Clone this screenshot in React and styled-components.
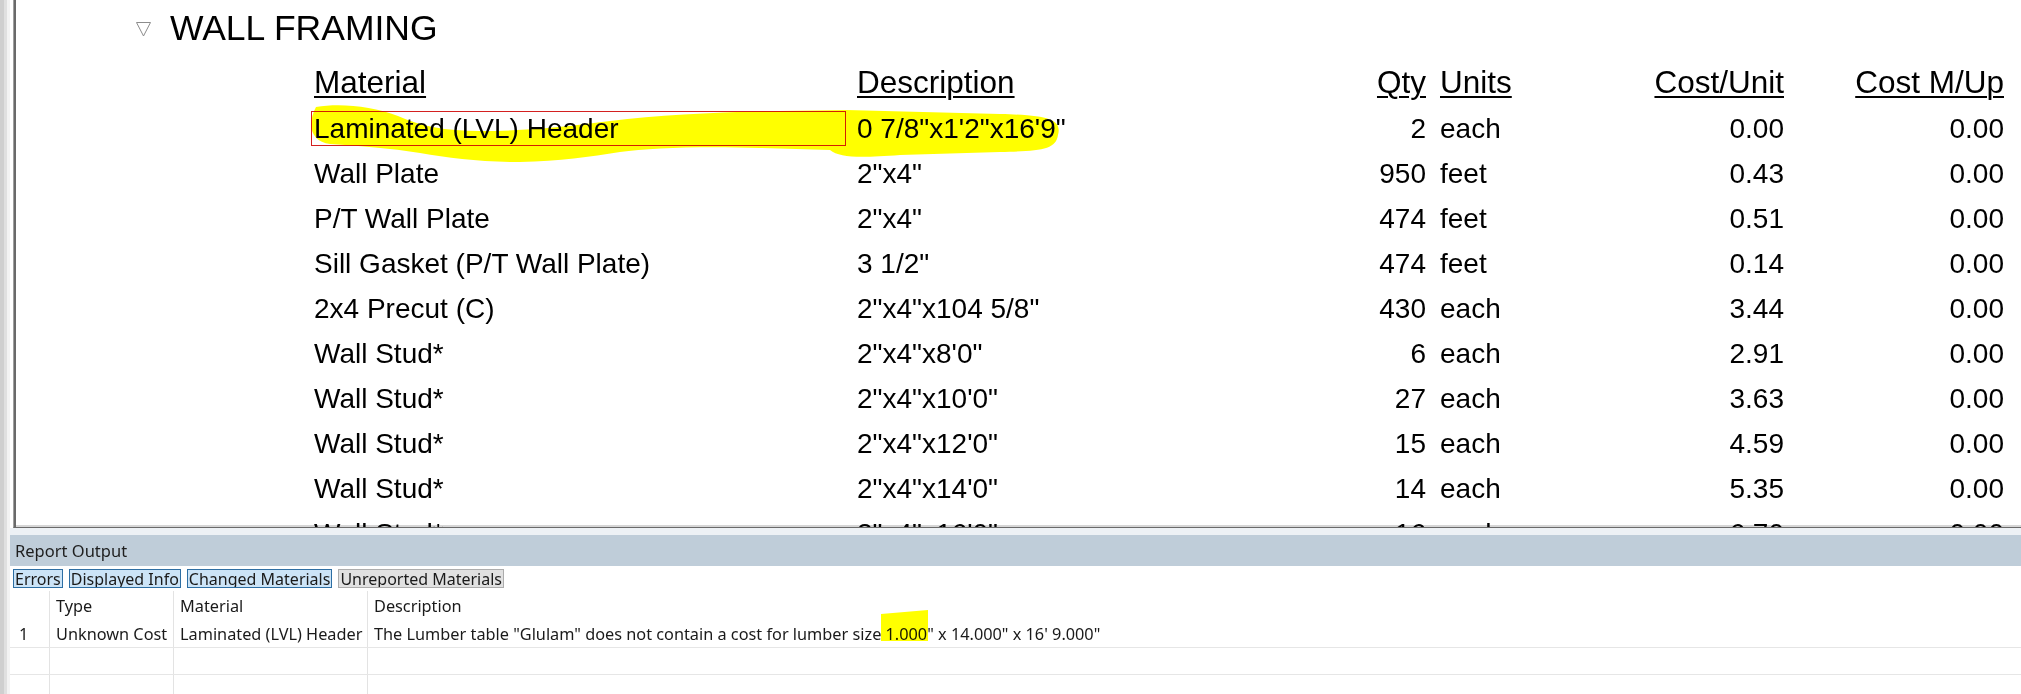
import React from 'react';
import styled, { createGlobalStyle, css } from 'styled-components';

const GlobalStyle = createGlobalStyle`
  html, body {
    margin: 0;
    padding: 0;
    background: #fff;
    overflow: hidden;
  }
`;

const Window = styled.div`
  position: relative;
  display: flex;
  width: 2021px;
  height: 694px;
  overflow: hidden;
  background: #fff;
`;

const SideStrip = styled.div`
  flex: 0 0 10px;
  background: linear-gradient(to right, #cfcfcf 0 4px, #e0e0e0 4px 7px, #f3f3f3 7px 10px);
`;

const Main = styled.div`
  flex: 1;
  min-width: 0;
  display: flex;
  flex-direction: column;
`;

const TakeoffPane = styled.div`
  flex: 0 0 528px;
  box-sizing: border-box;
  margin-left: 3px;
  padding: 8px 0 0 2px;
  border-left: 1px solid #a0a0a0;
  border-bottom: 1px solid #6a6a6a;
  box-shadow: inset 2px 0 0 #6a6a6a, inset 0 -2px 0 #d6d6d6;
  overflow: hidden;
  font-family: 'Liberation Sans', Arial, sans-serif;
  color: #000;
`;

const GroupHeader = styled.div`
  display: flex;
  align-items: center;
  gap: 18px;
  height: 40px;
  padding-left: 119px;
  font-size: 35.5px;
  line-height: 40px;
  white-space: nowrap;
`;

const Table = styled.div`
  margin: 11px 0 0 295px;
`;

const Row = styled.div`
  display: grid;
  grid-template-columns: 535px 524px 59px 171px 187px 220px;
  align-items: center;
  height: ${({ header }) => (header ? 47 : 45)}px;
`;

const cellPads = ['0 0 0 2px', '0 0 0 10px', '0 2px 0 0', '0 0 0 10px', '0 2px 0 0', '0 2px 0 0'];
const cellAligns = ['left', 'left', 'right', 'left', 'right', 'right'];

const HeadCell = styled.div`
  box-sizing: border-box;
  border: 1px solid transparent;
  padding: ${({ col }) => cellPads[col]};
  text-align: ${({ col }) => cellAligns[col]};
  font-size: 31.5px;
  line-height: 45px;
  white-space: nowrap;

  span {
    text-decoration: underline;
    text-decoration-thickness: 2px;
    text-underline-offset: 3px;
  }
`;

const Cell = styled.div`
  box-sizing: border-box;
  height: 35px;
  border: 1px solid transparent;
  padding: ${({ col }) => cellPads[col]};
  text-align: ${({ col }) => cellAligns[col]};
  font-size: 28px;
  line-height: 33px;
  white-space: nowrap;

  ${({ selected }) =>
    selected &&
    css`
      border-color: #d42020;
    `}
`;

const Splitter = styled.div`
  flex: 0 0 7px;
  background: #edf1f5;
`;

const OutputBar = styled.div`
  flex: 0 0 31px;
  padding-left: 5px;
  background: #bfcdd9;
  font: 16.5px/31px 'Noto Sans', sans-serif;
  color: #1e1e1e;
`;

const FilterBar = styled.div`
  display: flex;
  gap: 6px;
  height: 24px;
  box-sizing: border-box;
  padding: 3px 0 0 3px;
`;

const FilterTab = styled.div`
  height: 19px;
  box-sizing: border-box;
  padding: 0 1px;
  overflow: hidden;
  font: 16px/18px 'Noto Sans', sans-serif;
  color: #1a1a1a;
  white-space: nowrap;
  border: 1px solid ${({ active }) => (active ? '#2d6ea3' : '#adadad')};
  background: ${({ active }) => (active ? '#cce4f7' : '#e1e1e1')};
`;

const OutputGrid = styled.div`
  margin-top: 3px;
  font: 16.3px 'Noto Sans', sans-serif;
  color: #1a1a1a;
`;

const GridRow = styled.div`
  display: grid;
  grid-template-columns: 39px 124px 194px 1fr;
  height: ${({ header }) => (header ? 30 : 27)}px;
  box-sizing: border-box;
  border-bottom: 1px solid ${({ header }) => (header ? 'transparent' : '#e6e6e6')};
`;

const GridCell = styled.div`
  padding-left: ${({ first }) => (first ? 8 : 6)}px;
  border-left: 1px solid ${({ first }) => (first ? 'transparent' : '#e3e3e3')};
  line-height: ${({ header }) => (header ? 30 : 26)}px;
  white-space: nowrap;
`;

const Highlighter = styled.svg`
  position: absolute;
  left: 0;
  top: 0;
  pointer-events: none;
  mix-blend-mode: multiply;
`;

const Expander = () => (
  <svg width="17" height="17" viewBox="0 0 17 17">
    <polygon points="1.5,2.5 15.5,2.5 8.5,16" fill="#fff" stroke="#8c8c8c" strokeWidth="1" />
  </svg>
);

const headers = ['Material', 'Description', 'Qty', 'Units', 'Cost/Unit', 'Cost M/Up'];

const materials = [
  ['Laminated (LVL) Header', '0 7/8"x1\'2"x16\'9"', '2', 'each', '0.00', '0.00'],
  ['Wall Plate', '2"x4"', '950', 'feet', '0.43', '0.00'],
  ['P/T Wall Plate', '2"x4"', '474', 'feet', '0.51', '0.00'],
  ['Sill Gasket (P/T Wall Plate)', '3 1/2"', '474', 'feet', '0.14', '0.00'],
  ['2x4 Precut (C)', '2"x4"x104 5/8"', '430', 'each', '3.44', '0.00'],
  ['Wall Stud*', '2"x4"x8\'0"', '6', 'each', '2.91', '0.00'],
  ['Wall Stud*', '2"x4"x10\'0"', '27', 'each', '3.63', '0.00'],
  ['Wall Stud*', '2"x4"x12\'0"', '15', 'each', '4.59', '0.00'],
  ['Wall Stud*', '2"x4"x14\'0"', '14', 'each', '5.35', '0.00'],
  ['Wall Stud*', '2"x4"x16\'0"', '16', 'each', '6.70', '0.00'],
];

const filters = [
  { label: 'Errors', active: true },
  { label: 'Displayed Info', active: true },
  { label: 'Changed Materials', active: true },
  { label: 'Unreported Materials', active: false },
];

const messages = [
  [
    '1',
    'Unknown Cost',
    'Laminated (LVL) Header',
    'The Lumber table "Glulam" does not contain a cost for lumber size 1.000" x 14.000" x 16\' 9.000"',
  ],
  ['', '', '', ''],
  ['', '', '', ''],
];

const App = () => (
  <Window>
    <GlobalStyle />
    <SideStrip />
    <Main>
      <TakeoffPane>
        <GroupHeader>
          <Expander />
          WALL FRAMING
        </GroupHeader>
        <Table>
          <Row header>
            {headers.map((h, i) => (
              <HeadCell key={h} col={i}>
                <span>{h}</span>
              </HeadCell>
            ))}
          </Row>
          {materials.map((row, r) => (
            <Row key={r}>
              {row.map((value, i) => (
                <Cell key={i} col={i} selected={r === 0 && i === 0}>
                  {value}
                </Cell>
              ))}
            </Row>
          ))}
        </Table>
      </TakeoffPane>
      <Splitter />
      <OutputBar>Report Output</OutputBar>
      <FilterBar>
        {filters.map(f => (
          <FilterTab key={f.label} active={f.active}>
            {f.label}
          </FilterTab>
        ))}
      </FilterBar>
      <OutputGrid>
        <GridRow header>
          <GridCell first header />
          <GridCell header>Type</GridCell>
          <GridCell header>Material</GridCell>
          <GridCell header>Description</GridCell>
        </GridRow>
        {messages.map((m, r) => (
          <GridRow key={r}>
            {m.map((value, i) => (
              <GridCell key={i} first={i === 0}>
                {value}
              </GridCell>
            ))}
          </GridRow>
        ))}
      </OutputGrid>
    </Main>
    <Highlighter width="2021" height="694" viewBox="0 0 2021 694">
      <path
        fill="#ffff00"
        d="M 316 107 C 340 103, 372 106, 398 116 C 420 126, 445 131, 480 131 C 530 131, 570 126, 610 121 C 660 115, 720 112, 780 111 L 846 110 L 1000 114 C 1050 115, 1062 120, 1058 135 C 1056 150, 1040 151, 1000 152 L 900 155 C 860 158, 840 158, 830 150 L 760 148 C 700 146, 650 148, 620 152 C 590 157, 560 161, 520 162 C 480 162, 450 158, 420 153 C 390 148, 360 146, 330 144 C 312 142, 306 126, 316 107 Z"
      />
      <polygon fill="#ffff00" points="881,614 928,610 928,641 881,641" />
    </Highlighter>
  </Window>
);

export default App;
